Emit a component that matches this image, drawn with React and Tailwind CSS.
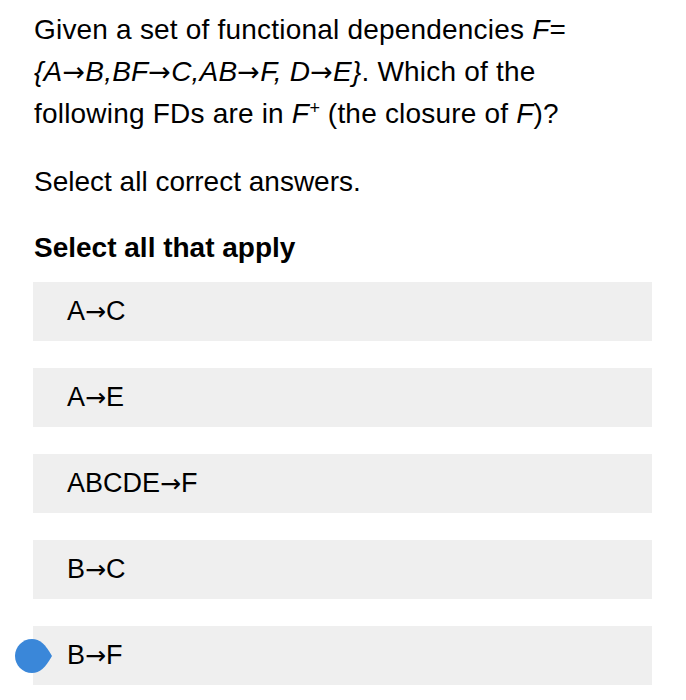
import React from "react";

// arrows look thin in Liberation, borrow DejaVu's
function Arr({ size = "text-[27px]" }) {
  return (
    <span
      className={size + " leading-none"}
      style={{ fontFamily: '"DejaVu Sans", sans-serif' }}
    >
      →
    </span>
  );
}

function Fd({ text }) {
  const [l, r] = text.split("→");
  return (
    <>
      {l}
      <Arr size="text-[25px]" />
      {r}
    </>
  );
}

function Marker() {
  return (
    <svg
      width="40"
      height="36"
      viewBox="0 0 40 36"
      className="absolute left-[14px] top-1/2 -translate-y-1/2"
    >
      <path
        d="M18 1 C26 1 31 6 38 18 C31 30 26 35 18 35 C8.6 35 1 27.4 1 18 C1 8.6 8.6 1 18 1 Z"
        fill="#3a87d9"
      />
    </svg>
  );
}

const fds = ["A→C", "A→E", "ABCDE→F", "B→C", "B→F"];

export default function App() {
  return (
    <div
      className="bg-white text-black w-[686px] h-[700px] overflow-hidden"
      style={{ fontFamily: '"Liberation Sans", Arial, sans-serif' }}
    >
      <div className="pl-[34px] pr-[20px] pt-[9px]">
        <p className="text-[28px] leading-[42px] tracking-[0.2px]">
          Given a set of functional dependencies <i>F</i>=
          <br />
          <i>
            {"{"}A<Arr />B,BF<Arr />C,AB<Arr />F, D<Arr />E{"}"}
          </i>
          . Which of the
          <br />
          following FDs are in <i>F</i>
          <sup className="text-[18px] italic">+</sup> (the closure of <i>F</i>)?
        </p>
        <p className="text-[28px] leading-[42px] mt-[26px]">
          Select all correct answers.
        </p>
        <p className="text-[28px] leading-[42px] font-bold mt-[24px]">
          Select all that apply
        </p>
      </div>

      <div className="mt-[13px] flex flex-col gap-[27px]">
        {fds.map((opt, i) => (
          <div key={opt} className="relative">
            <div className="ml-[33px] mr-[34px] h-[59px] bg-[#efefef] flex items-center pl-[34px] text-[27px]">
              <span>
                <Fd text={opt} />
              </span>
            </div>
            {i === fds.length - 1 && <Marker />}
          </div>
        ))}
      </div>
    </div>
  );
}
